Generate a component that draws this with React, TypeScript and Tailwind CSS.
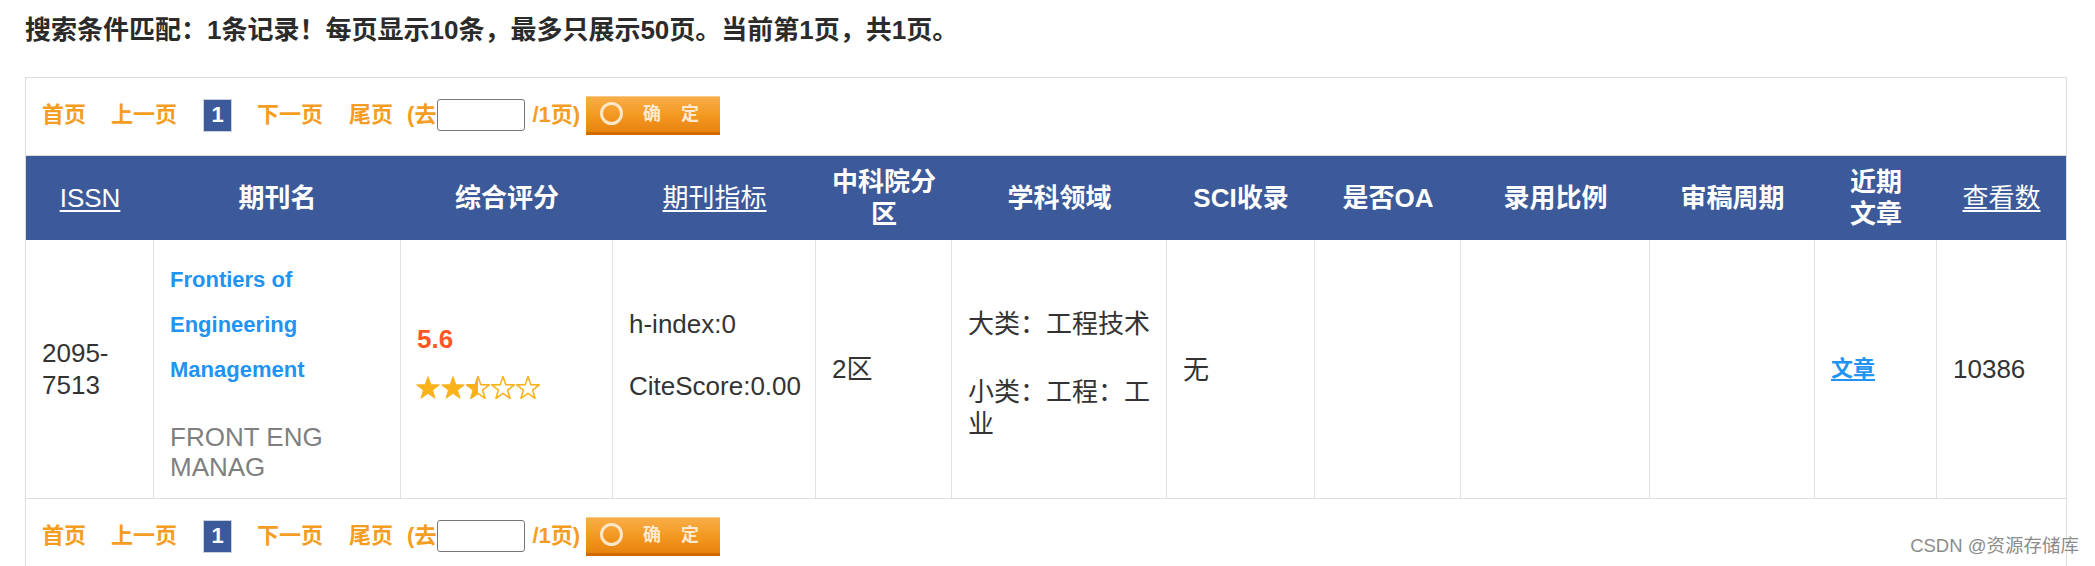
import React from "react";

const STAR =
  "M12 2.5L14.35 9.26L21.51 9.41L15.8 13.74L17.88 20.59L12 16.5L6.12 20.59L8.2 13.74L2.49 9.41L9.65 9.26Z";

function Star({ kind, id }: { kind: "full" | "half" | "empty"; id: string }) {
  const c = "#f9b21a";
  return (
    <svg width="24" height="23" viewBox="2 2 20 19.2" className="block">
      {kind === "half" && (
        <defs>
          <clipPath id={id}>
            <rect x="0" y="0" width="12" height="24" />
          </clipPath>
        </defs>
      )}
      {kind === "full" && <path d={STAR} fill={c} stroke={c} strokeWidth="0.8" strokeLinejoin="round" />}
      {kind !== "full" && (
        <path d={STAR} fill="none" stroke={c} strokeWidth="1.3" strokeLinejoin="round" />
      )}
      {kind === "half" && (
        <path d={STAR} fill={c} stroke={c} strokeWidth="0.8" clipPath={`url(#${id})`} />
      )}
    </svg>
  );
}

function Pager() {
  return (
    <div className="h-[77px] pb-[3px] pl-[16px] flex items-center text-[22px] font-bold text-[#f49d22] leading-none">
      <span>首页</span>
      <span className="ml-[25px]">上一页</span>
      <span className="ml-[26px] w-[29px] h-[33px] bg-[#3c5a99] border border-[#c9d0de] text-white flex items-center justify-center">
        1
      </span>
      <span className="ml-[25px]">下一页</span>
      <span className="ml-[26px]">尾页</span>
      <span className="ml-[14px]">(去</span>
      <input
        type="text"
        className="ml-[1px] w-[88px] h-[32px] border border-[#767676] rounded-[3px] bg-white outline-none"
      />
      <span className="ml-[7px]">/1页)</span>
      <div className="ml-[6px] w-[134px] h-[39px] bg-linear-to-b from-[#f9ae48] via-[#f39a22] to-[#e8830f] border-b-[3px] border-[#d26a02] flex items-center shadow-[inset_0_1px_0_#fcc98a]">
        <span className="ml-[14px] w-[23px] h-[23px] rounded-full border-[3px] border-[#fde7c9]" />
        <span className="ml-[20px] text-[18px] font-bold text-[#fde9cf]">确</span>
        <span className="ml-[20px] text-[18px] font-bold text-[#fde9cf]">定</span>
      </div>
    </div>
  );
}

const GRID =
  "grid grid-cols-[128px_247px_212px_203px_136px_215px_148px_146px_189px_165px_122px_129px]";

export default function App() {
  const cell = "border-r border-[#e2e2e2] px-[16px] flex items-center";
  return (
    <div className="relative w-[2095px] h-[566px] overflow-hidden bg-white font-['Liberation_Sans','Noto_Sans_CJK_SC',sans-serif] text-[#333]">
      <div className="pt-[12px] pl-[25px] text-[26px] font-bold leading-[36px] text-[#2b2b2b] whitespace-nowrap">
        搜索条件匹配：1条记录！每页显示10条，最多只展示50页。当前第1页，共1页。
      </div>
      <div className="mt-[29px] ml-[25px] w-[2042px] border border-[#dddddd]">
        <Pager />
        <div className="border-t border-[#dddddd]">
          <div className={`${GRID} h-[84px] bg-[#3c5a99] text-white text-[26px] leading-[32px] font-bold`}>
            <div className="flex items-center justify-center">
              <span className="underline font-normal underline-offset-[3px]">ISSN</span>
            </div>
            <div className="flex items-center justify-center">期刊名</div>
            <div className="flex items-center justify-center">综合评分</div>
            <div className="flex items-center justify-center">
              <span className="underline font-normal underline-offset-[3px]">期刊指标</span>
            </div>
            <div className="flex items-center justify-center text-center">
              中科院分
              <br />
              区
            </div>
            <div className="flex items-center justify-center">学科领域</div>
            <div className="flex items-center justify-center">SCI收录</div>
            <div className="flex items-center justify-center">是否OA</div>
            <div className="flex items-center justify-center">录用比例</div>
            <div className="flex items-center justify-center">审稿周期</div>
            <div className="flex items-center justify-center text-center">
              近期
              <br />
              文章
            </div>
            <div className="flex items-center justify-center">
              <span className="underline font-normal underline-offset-[3px]">查看数</span>
            </div>
          </div>
          <div className={`${GRID} h-[259px] border-b border-[#dddddd] text-[26px] leading-[32px]`}>
            <div className={cell}>
              <div>
                2095-
                <br />
                7513
              </div>
            </div>
            <div className={cell}>
              <div>
                <div className="text-[22px] font-bold leading-[45px] text-[#2193f3] whitespace-nowrap">
                  Frontiers of
                  <br />
                  Engineering
                  <br />
                  Management
                </div>
                <div className="mt-[30px] leading-[30px] text-[#7f7f7f] whitespace-nowrap">
                  FRONT ENG
                  <br />
                  MANAG
                </div>
              </div>
            </div>
            <div className={cell}>
              <div className="pb-[12px]">
                <div className="font-bold text-[#ff5722] leading-[32px]">5.6</div>
                <div className="mt-[17px] h-[31px] flex items-center gap-[1px] -ml-[1px]">
                  <Star kind="full" id="s1" />
                  <Star kind="full" id="s2" />
                  <Star kind="half" id="s3" />
                  <Star kind="empty" id="s4" />
                  <Star kind="empty" id="s5" />
                </div>
              </div>
            </div>
            <div className={cell}>
              <div className="pb-[28px] whitespace-nowrap">
                <div>h-index:0</div>
                <div className="mt-[30px]">CiteScore:0.00</div>
              </div>
            </div>
            <div className={cell}>
              <div>2区</div>
            </div>
            <div className={cell}>
              <div className="pt-[10px]">
                <div className="whitespace-nowrap">大类：工程技术</div>
                <div className="mt-[36px] whitespace-nowrap">
                  小类：工程：工
                  <br />
                  业
                </div>
              </div>
            </div>
            <div className={cell}>
              <div className="pt-[2px]">无</div>
            </div>
            <div className={cell} />
            <div className={cell} />
            <div className={cell} />
            <div className={cell}>
              <span className="text-[22px] font-bold text-[#2193f3] underline underline-offset-[3px]">文章</span>
            </div>
            <div className="px-[16px] flex items-center">10386</div>
          </div>
          <Pager />
        </div>
      </div>
      <div className="absolute right-[16px] top-[533px] text-[18.5px] leading-[26px] text-[#8c8c8c] [text-shadow:0_0_2px_#ffffff] whitespace-nowrap">
        CSDN @资源存储库
      </div>
    </div>
  );
}
